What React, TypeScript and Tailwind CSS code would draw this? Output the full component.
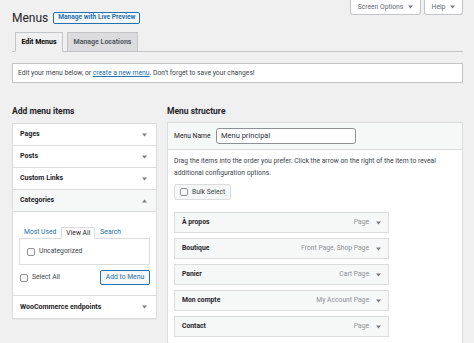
import React from "react";

const Down = ({ className = "" }: { className?: string }) => (
  <svg width="5" height="4" viewBox="0 0 5 4" className={className}>
    <polygon points="0,0.5 5,0.5 2.5,3.5" fill="#787c82" />
  </svg>
);
const Up = () => (
  <svg width="5" height="4" viewBox="0 0 5 4">
    <polygon points="0,3.5 5,3.5 2.5,0.5" fill="#787c82" />
  </svg>
);

const Box = () => (
  <span className="inline-block w-[8px] h-[8px] rounded-[2px] border border-[#8c8f94] bg-white shrink-0" />
);

const Row = ({ label, last = false }: { label: string; last?: boolean }) => (
  <div
    className={`h-[22px] flex items-center justify-between pl-[7px] pr-[9px] ${last ? "" : "border-b border-[#dcdcde]"}`}
  >
    <span className="text-[7px] font-bold text-[#1d2327]">{label}</span>
    <Down />
  </div>
);

const items: [string, string][] = [
  ["À propos", "Page"],
  ["Boutique", "Front Page, Shop Page"],
  ["Panier", "Cart Page"],
  ["Mon compte", "My Account Page"],
  ["Contact", "Page"],
];

export default function App() {
  return (
    <div
      className="w-[474px] h-[343px] overflow-hidden bg-[#f0f0f1] text-[#3c434a]"
      style={{ fontFamily: "Roboto, 'Liberation Sans', sans-serif" }}
    >
      <div className="pl-[12px] pr-[11px]">
        {/* top row */}
        <div className="flex justify-between items-start">
          <div className="flex items-center gap-[5px] pt-[11px]">
            <h1 className="text-[12px] leading-[14px] text-[#1d2327]">Menus</h1>
            <span className="h-[12px] px-[4px] flex items-center border border-[#2271b1] rounded-[2px] bg-[#f6f7f7] text-[6.6px] font-bold text-[#2271b1]">
              Manage with Live Preview
            </span>
          </div>
          <div className="flex gap-[3px]">
            <div className="h-[15px] w-[71px] flex items-center justify-center gap-[5px] bg-white border border-t-0 border-[#c3c4c7] rounded-b-[3px] text-[6.75px] text-[#646970]">
              Screen Options <Down />
            </div>
            <div className="h-[15px] w-[39px] flex items-center justify-center gap-[5px] bg-white border border-t-0 border-[#c3c4c7] rounded-b-[3px] text-[6.75px] text-[#646970]">
              Help <Down />
            </div>
          </div>
        </div>

        {/* tabs */}
        <div className="mt-[7px] flex items-end gap-[4px] pl-[3px] border-b border-[#c3c4c7] h-[20px]">
          <div className="h-[20px] -mb-px w-[48px] flex items-center justify-center border border-[#c3c4c7] border-b-[#f0f0f1] bg-[#f0f0f1] text-[7px] font-bold text-[#000]">
            Edit Menus
          </div>
          <div className="h-[19px] w-[71px] flex items-center justify-center border border-b-0 border-[#c3c4c7] bg-[#dcdcde] text-[7px] font-bold text-[#50575e]">
            Manage Locations
          </div>
        </div>

        {/* notice */}
        <div className="mt-[11px] h-[20px] flex items-center pl-[5px] bg-white border border-[#c3c4c7] text-[6.75px] text-[#3c434a]">
          <span>
            Edit your menu below, or <span className="text-[#2271b1] underline">create a new menu</span>. Don't forget to save your changes!
          </span>
        </div>

        {/* columns */}
        <div className="mt-[17px] flex gap-[10px]">
          {/* left */}
          <div className="w-[145px] shrink-0">
            <div className="h-[22px] flex items-center text-[8.5px] font-bold text-[#1d2327]">Add menu items</div>
            <div className="mt-[1px] bg-white border border-[#dcdcde] shadow-[0_1px_1px_rgba(0,0,0,0.04)]">
              <Row label="Pages" />
              <Row label="Posts" />
              <Row label="Custom Links" />
              <div className="border-b border-[#dcdcde]">
                <div className="h-[22px] flex items-center justify-between pl-[7px] pr-[9px] bg-[#f6f7f7] border-b border-[#dcdcde]">
                  <span className="text-[7px] font-bold text-[#1d2327]">Categories</span>
                  <Up />
                </div>
                <div className="px-[6px] pt-[15px] pb-[10px]">
                  <div className="flex items-end h-[11px] text-[6.75px] pl-[5px]">
                    <span className="text-[#2271b1] mr-[5px] leading-[11px]">Most Used</span>
                    <span className="h-[12px] -mb-px px-[4px] flex items-center bg-white border border-[#dcdcde] border-b-white text-[#1d2327]">
                      View All
                    </span>
                    <span className="text-[#2271b1] ml-[5px] leading-[11px]">Search</span>
                  </div>
                  <div className="h-[27px] flex items-center gap-[4px] pl-[7px] bg-white border border-[#dcdcde] text-[6.75px] text-[#3c434a]">
                    <Box /> Uncategorized
                  </div>
                  <div className="mt-[5px] flex items-center justify-between">
                    <div className="flex items-center gap-[4px] pl-[1px] text-[6.75px] text-[#3c434a]">
                      <Box /> Select All
                    </div>
                    <div className="h-[15px] w-[50px] flex items-center justify-center border border-[#2271b1] rounded-[2px] bg-[#f6f7f7] text-[6.75px] text-[#2271b1]">
                      Add to Menu
                    </div>
                  </div>
                </div>
              </div>
              <Row label="WooCommerce endpoints" last />
            </div>
          </div>

          {/* right */}
          <div className="w-[296px] shrink-0">
            <div className="h-[22px] flex items-center text-[8.5px] font-bold text-[#1d2327]">Menu structure</div>
            <div className="bg-white border border-[#dcdcde] h-[240px]">
              <div className="h-[27px] flex items-center px-[6px] bg-[#f6f7f7] border-b border-[#dcdcde]">
                <span className="w-[42px] text-[6.75px] text-[#1d2327]">Menu Name</span>
                <div className="w-[140px] h-[16px] flex items-center pl-[4px] bg-white border border-[#8c8f94] rounded-[3px] text-[7.5px] text-[#2c3338]">
                  Menu principal
                </div>
              </div>
              <div className="px-[6px] pt-[5px]">
                <p className="text-[6.75px] leading-[12px] text-[#3c434a]">
                  Drag the items into the order you prefer. Click the arrow on the right of the item to reveal
                  <br />
                  additional configuration options.
                </p>
                <div className="mt-[5px] h-[16px] w-[57px] flex items-center gap-[4px] pl-[5px] bg-[#f6f7f7] border border-[#dcdcde] rounded-[2px] text-[6.75px] text-[#3c434a]">
                  <Box /> Bulk Select
                </div>
                <div className="mt-[12px] flex flex-col gap-[5px]">
                  {items.map(([t, s]) => (
                    <div
                      key={t}
                      className="w-[215px] h-[21px] flex items-center justify-between pl-[7px] pr-[7px] bg-[#f6f7f7] border border-[#dcdcde]"
                    >
                      <span className="text-[6.8px] font-bold text-[#1d2327]">{t}</span>
                      <span className="flex items-center gap-[7px]">
                        <span className="text-[6.75px] text-[#8c8f94]">{s}</span>
                        <Down />
                      </span>
                    </div>
                  ))}
                </div>
              </div>
            </div>
          </div>
        </div>
      </div>
    </div>
  );
}
